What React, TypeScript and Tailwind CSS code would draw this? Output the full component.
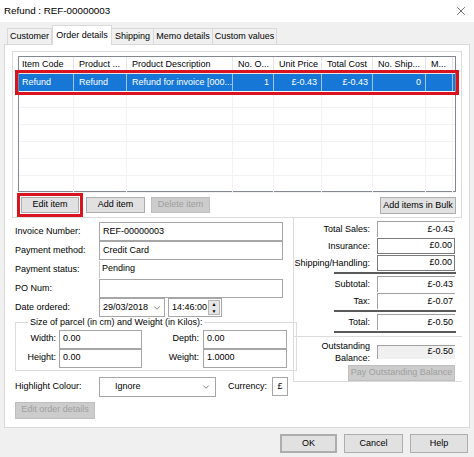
import { X, ChevronDown } from "lucide-react";
import clsx from "clsx";
import type { ReactNode } from "react";

const cols = [
  { w: 55, h: "Item Code", v: "Refund", r: false },
  { w: 53, h: "Product ...", v: "Refund", r: false },
  { w: 106, h: "Product Description", v: "Refund for invoice [000...", r: false },
  { w: 41, h: "No. O...", v: "1", r: true },
  { w: 48, h: "Unit Price", v: "£-0.43", r: true },
  { w: 51, h: "Total Cost", v: "£-0.43", r: true },
  { w: 53, h: "No. Ship...", v: "0", r: true },
  { w: 27, h: "M...", v: "", r: false },
];

function Btn({ children, className, disabled }: { children: ReactNode; className?: string; disabled?: boolean }) {
  return (
    <div
      className={clsx(
        "flex items-center justify-center whitespace-nowrap border",
        disabled ? "border-[#bfbfbf] bg-[#cccccc] text-[#a0a0a0]" : "border-[#adadad] bg-[#e1e1e1]",
        className
      )}
    >
      {children}
    </div>
  );
}

function Field({ children, className }: { children?: ReactNode; className?: string }) {
  return <div className={clsx("flex h-[19px] items-center border border-[#a6a6a6] bg-white px-[3px]", className)}>{children}</div>;
}

function FormRow({ label, children, className }: { label: string; children: ReactNode; className?: string }) {
  return (
    <div className={clsx("flex items-center", className)}>
      <div className="w-[84px]">{label}</div>
      {children}
    </div>
  );
}

function Money({ label, value, kind }: { label: ReactNode; value: string; kind: "ro" | "edit" | "gray" }) {
  return (
    <div className="flex items-center">
      <div className="w-[76px] whitespace-nowrap text-right leading-[12px]">{label}</div>
      <div
        className={clsx(
          "ml-[7px] flex w-[78px] items-center justify-end pr-[2px]",
          kind === "ro" && "h-[16px] border-l border-t border-[#a0a0a0]",
          kind === "edit" && "h-[16px] border border-[#7a7a7a]",
          kind === "gray" && "h-[14px] border-l border-t border-[#a0a0a0] bg-[#f0f0f0]"
        )}
      >
        {value}
      </div>
    </div>
  );
}

export default function App() {
  return (
    <div className="flex h-[457px] w-[474px] flex-col overflow-hidden bg-[#f0f0f0] font-['Liberation_Sans',Arial,sans-serif] text-[9px] text-black">
      <div className="flex h-[22px] items-center justify-between bg-white pl-[4px] pr-[6px]">
        <span className="text-[9.8px]">Refund : REF-00000003</span>
        <X size={14} strokeWidth={1} />
      </div>

      <div className="flex h-[22px] items-end pl-[7px]">
        <div className="flex h-[16px] w-[45px] items-center justify-center border border-b-0 border-[#d9d9d9]">Customer</div>
        <div className="relative -mb-px flex h-[20px] w-[60px] items-center justify-center border border-b-0 border-[#d9d9d9] bg-white">Order details</div>
        <div className="flex h-[16px] w-[42px] items-center justify-center border border-b-0 border-l-0 border-[#d9d9d9]">Shipping</div>
        <div className="flex h-[16px] w-[59px] items-center justify-center border border-b-0 border-l-0 border-[#d9d9d9]">Memo details</div>
        <div className="flex h-[16px] w-[64px] items-center justify-center border border-b-0 border-l-0 border-[#d9d9d9]">Custom values</div>
      </div>

      <div className="mx-[4px] flex h-[384px] flex-col border border-[#d9d9d9] bg-white">
        <div className="mx-[7px] mt-[6px] flex h-[167px] flex-col border border-[#dcdcdc] px-[5px] pt-[4px]">
          <div className="h-[136px] border border-[#828790]">
            <div className="flex h-[17px] border-b border-[#e5e5e5]">
              {cols.map((c, i) => (
                <div key={i} style={{ width: c.w }} className={clsx("flex items-center overflow-hidden whitespace-nowrap border-r border-[#e5e5e5]", i === 0 ? "pl-[3px]" : "pl-[5px]")}>
                  {c.h}
                </div>
              ))}
            </div>
            <div className="flex h-[17px] bg-[#1677d6] text-white outline-[3px] outline-offset-[1px] outline-[#d9141e] outline-solid">
              {cols.map((c, i) => (
                <div key={i} style={{ width: c.w }} className={clsx("flex items-center overflow-hidden whitespace-nowrap border-r border-[#9cc6ee]", c.r ? "justify-end pr-[4px]" : i === 0 ? "pl-[3px]" : "pl-[5px]")}>
                  {c.v}
                </div>
              ))}
            </div>
            {[0, 1, 2, 3, 4, 5].map((r) => (
              <div key={r} className="flex h-[17px] border-b border-[#f2f2f2]">
                {cols.map((c, i) => (
                  <div key={i} style={{ width: c.w }} className="border-r border-[#f2f2f2]" />
                ))}
              </div>
            ))}
          </div>
          <div className="mt-[5px] flex items-start">
            <Btn className="ml-[3px] h-[16px] w-[58px] outline-[3px] outline-offset-[1px] outline-[#d9141e] outline-solid">Edit item</Btn>
            <Btn className="ml-[7px] h-[16px] w-[59px]">Add item</Btn>
            <Btn disabled className="ml-[6px] h-[16px] w-[59px]">Delete item</Btn>
            <Btn className="ml-auto h-[17px] w-[76px]">Add items in Bulk</Btn>
          </div>
        </div>

        <div className="flex">
          <div className="ml-[10px] flex w-[278px] flex-col pt-[4px]">
            <FormRow label="Invoice Number:">
              <Field className="w-[184px]">REF-00000003</Field>
            </FormRow>
            <FormRow label="Payment method:">
              <Field className="w-[184px]">Credit Card</Field>
            </FormRow>
            <FormRow label="Payment status:" className="h-[19px]">
              <div className="flex h-[17px] w-[184px] items-start border-l border-[#c8c8c8] pl-[2px] pt-[1px]">Pending</div>
            </FormRow>
            <FormRow label="PO Num:">
              <Field className="w-[184px]" />
            </FormRow>
            <FormRow label="Date ordered:">
              <Field className="w-[66px] justify-between pr-[2px]">
                <span>29/03/2018</span>
                <ChevronDown size={10} strokeWidth={1.2} />
              </Field>
              <Field className="ml-[3px] w-[54px] justify-between pr-[1px]">
                <span>14:46:00</span>
                <div className="flex h-[15px] w-[12px] flex-col items-center justify-center gap-[2px] border border-[#b5b5b5] bg-[#e5e5e5] text-[5px] leading-[5px]">
                  <span>▲</span>
                  <span>▼</span>
                </div>
              </Field>
            </FormRow>

            <fieldset className="-mt-[1px] w-[275px] border border-[#dcdcdc] px-[9px] pb-[2px]">
              <legend className="ml-[3px] px-[2px]">Size of parcel (in cm) and Weight (in Kilos):</legend>
              <div className="flex items-center">
                <div className="w-[31px] text-right">Width:</div>
                <Field className="ml-[3px] w-[83px]">0.00</Field>
                <div className="ml-[21px] w-[36px] text-right">Depth:</div>
                <Field className="ml-[4px] w-[84px]">0.00</Field>
              </div>
              <div className="flex items-center">
                <div className="w-[31px] text-right">Height:</div>
                <Field className="ml-[3px] w-[83px]">0.00</Field>
                <div className="ml-[21px] w-[36px] text-right">Weight:</div>
                <Field className="ml-[4px] w-[84px]">1.0000</Field>
              </div>
            </fieldset>

            <FormRow label="Highlight Colour:" className="mt-[6px]">
              <Field className="h-[20px] w-[117px] justify-between border-[#a6a6a6] pl-[15px] pr-[4px]">
                <span>Ignore</span>
                <ChevronDown size={10} strokeWidth={1.2} />
              </Field>
              <span className="ml-[12px]">Currency:</span>
              <Field className="ml-[5px] w-[16px] justify-center px-0">£</Field>
            </FormRow>

            <Btn disabled className="mt-[5px] h-[17px] w-[80px]">Edit order details</Btn>
          </div>

          <div className="flex h-[164px] w-[169px] flex-col border-b border-l border-[#dcdcdc] pt-[3px]">
            <div className="flex flex-col gap-[1px]">
              <Money label="Total Sales:" value="£-0.43" kind="ro" />
              <Money label="Insurance:" value="£0.00" kind="edit" />
              <Money label="Shipping/Handling:" value="£0.00" kind="edit" />
            </div>
            <div className="ml-[40px] mt-[1px] h-[2px] w-[122px] bg-[#5a5a5a]" />
            <div className="mt-[2px] flex flex-col gap-[1px]">
              <Money label="Subtotal:" value="£-0.43" kind="ro" />
              <Money label="Tax:" value="£-0.07" kind="ro" />
            </div>
            <div className="ml-[40px] mt-[1px] h-[2px] w-[122px] bg-[#5a5a5a]" />
            <div className="mt-[2px]">
              <Money label="Total:" value="£-0.50" kind="ro" />
            </div>
            <div className="ml-[40px] mt-[1px] h-[2px] w-[122px] bg-[#5a5a5a]" />
            <div className="mt-[3px] h-px w-full bg-[#dcdcdc]" />
            <div className="mt-[3px]">
              <Money
                label={
                  <>
                    Outstanding
                    <br />
                    Balance:
                  </>
                }
                value="£-0.50"
                kind="gray"
              />
            </div>
            <Btn disabled className="ml-[54px] mt-[1px] h-[17px] w-[107px]">Pay Outstanding Balance</Btn>
          </div>
        </div>
      </div>

      <div className="mt-[6px] flex justify-end gap-[7px] pr-[6px]">
        <Btn className="h-[19px] w-[57px] border-2 border-[#0078d7]">OK</Btn>
        <Btn className="h-[19px] w-[59px]">Cancel</Btn>
        <Btn className="h-[19px] w-[58px]">Help</Btn>
      </div>
    </div>
  );
}
